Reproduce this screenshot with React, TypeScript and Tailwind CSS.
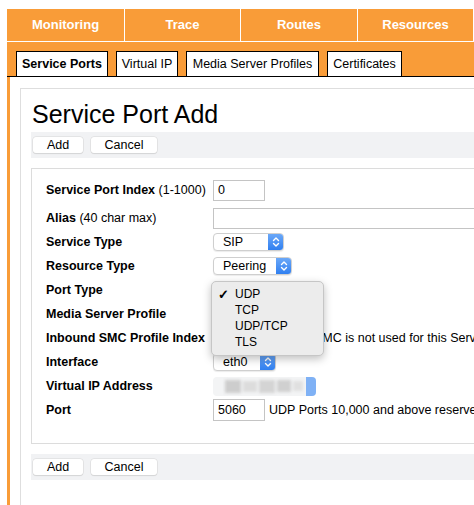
import React from "react";

const Chevrons = () => (
  <svg width="8" height="12" viewBox="0 0 8 12" fill="none" stroke="white" strokeWidth="1.4" strokeLinecap="round" strokeLinejoin="round">
    <path d="M1.5 4.5 L4 2 L6.5 4.5" />
    <path d="M1.5 7.5 L4 10 L6.5 7.5" />
  </svg>
);

function Select({ value, width, textPad = 9 }: { value: string; width: number; textPad?: number }) {
  return (
    <div
      className="h-[18px] flex items-stretch rounded-[4px] border border-[#cfcfcf] bg-white shadow-[0_1px_1px_rgba(0,0,0,0.08)] overflow-hidden"
      style={{ width }}
    >
      <div className="flex-1 flex items-center text-[12.5px] leading-none" style={{ paddingLeft: textPad }}>
        {value}
      </div>
      <div className="w-[15px] flex items-center justify-center bg-gradient-to-b from-[#6aa8f8] to-[#2f7ff0]">
        <Chevrons />
      </div>
    </div>
  );
}

function Row({ label, extra, children, h = 24, className = "" }: { label: string; extra?: string; children?: React.ReactNode; h?: number; className?: string }) {
  return (
    <div className={"flex items-center " + className} style={{ height: h }}>
      <div className="w-[167px] shrink-0 text-[12.5px] font-bold whitespace-nowrap">
        {label}
        {extra && <span className="font-normal"> {extra}</span>}
      </div>
      <div className="flex items-center whitespace-nowrap">{children}</div>
    </div>
  );
}

function ButtonBar() {
  return (
    <div className="h-[26px] bg-[#f1f2f4] flex items-center gap-[8px] pl-[2px]">
      <div className="w-[50px] h-[16px] bg-white rounded-[3px] shadow-[0_0_0_0.5px_#d6d6d6,0_1px_1px_rgba(0,0,0,0.12)] flex items-center justify-center text-[12.5px]">
        Add
      </div>
      <div className="w-[66px] h-[16px] bg-white rounded-[3px] shadow-[0_0_0_0.5px_#d6d6d6,0_1px_1px_rgba(0,0,0,0.12)] flex items-center justify-center text-[12.5px]">
        Cancel
      </div>
    </div>
  );
}

export default function App() {
  return (
    <div className="w-[474px] h-[505px] overflow-hidden bg-white pt-[9px] pl-[7px] font-['Liberation_Sans',Arial,sans-serif] text-black">
      <div className="h-full w-[640px] bg-[#f99c38] flex flex-col">
        {/* top nav */}
        <div className="flex h-[33px] border-b border-white text-white font-bold text-[13px] shrink-0">
          <div className="w-[118px] border-r border-white flex items-center justify-center">Monitoring</div>
          <div className="w-[116px] border-r border-white flex items-center justify-center">Trace</div>
          <div className="w-[117px] border-r border-white flex items-center justify-center">Routes</div>
          <div className="w-[116px] border-r border-white flex items-center justify-center">Resources</div>
        </div>
        {/* sub tabs */}
        <div className="h-[35px] flex items-end gap-[8px] pl-[9px] border-b border-black shrink-0 text-[12.5px] whitespace-nowrap">
          <div className="h-[25px] bg-white border border-b-0 border-black flex items-center justify-center font-bold w-[92px]">Service Ports</div>
          <div className="h-[25px] bg-white border border-b-0 border-black flex items-center justify-center w-[62px]">Virtual IP</div>
          <div className="h-[25px] bg-white border border-b-0 border-black flex items-center justify-center w-[133px]">Media Server Profiles</div>
          <div className="h-[25px] bg-white border border-b-0 border-black flex items-center justify-center w-[75px]">Certificates</div>
        </div>
        {/* content */}
        <div className="flex-1 ml-[3px] bg-white pt-[11px] pl-[10px]">
          <div className="h-full border-l border-t border-[#dedede] pl-[10px]">
            <div className="pt-[10px] h-[40px] text-[25px] leading-[30px] pl-[1px]">Service Port Add</div>
            <div className="mt-[3px]">
              <ButtonBar />
            </div>
            {/* form box */}
            <div className="mt-[10px] border border-[#dcdcdc] pl-[14px] pt-[9px] pb-[21px]">
              <Row label="Service Port Index" extra="(1-1000)">
                <div className="w-[52px] h-[21px] border border-[#c4c4c4] flex items-center pl-[4px] text-[12.5px]">0</div>
              </Row>
              <div className="h-[4px]" />
              <Row label="Alias" extra="(40 char max)">
                <div className="w-[300px] h-[21px] border border-[#c4c4c4]" />
              </Row>
              <Row label="Service Type">
                <Select value="SIP" width={71} />
              </Row>
              <Row label="Resource Type">
                <Select value="Peering" width={79} />
              </Row>
              <Row label="Port Type" className="relative">
                <Select value="" width={90} />
                <div className="absolute left-[165px] top-[3px] z-10 w-[113px] h-[75px] rounded-[5px] bg-[#ececec] border border-[#c6c6c6] shadow-[0_3px_8px_rgba(0,0,0,0.25)] pt-[4px] text-[12px]">
                  <div className="h-[16px] flex items-center">
                    <span className="w-[23px] pl-[6px] text-[13px] leading-none font-bold">✓</span>
                    <span>UDP</span>
                  </div>
                  <div className="h-[16px] flex items-center pl-[23px]">TCP</div>
                  <div className="h-[16px] flex items-center pl-[23px]">UDP/TCP</div>
                  <div className="h-[16px] flex items-center pl-[23px]">TLS</div>
                </div>
              </Row>
              <Row label="Media Server Profile" />
              <Row label="Inbound SMC Profile Index">
                <span className="ml-[101px] text-[12.5px]">SMC is not used for this Service Port</span>
              </Row>
              <Row label="Interface">
                <Select value="eth0" width={63} />
              </Row>
              <Row label="Virtual IP Address">
                <div className="w-[103px] h-[19px] rounded-[4px] bg-[#f3f4f5] flex items-stretch overflow-hidden">
                  <div className="flex-1 flex items-center gap-[2px] pl-[12px] blur-[1.5px]">
                    <div className="w-[16px] h-[13px] bg-[#cdcdcd]" />
                    <div className="w-[14px] h-[11px] bg-[#dcdcdc]" />
                    <div className="w-[16px] h-[13px] bg-[#d4d4d4]" />
                    <div className="w-[14px] h-[12px] bg-[#d0d0d0]" />
                    <div className="w-[10px] h-[10px] bg-[#e0e0e0]" />
                  </div>
                  <div className="w-[10px] bg-[#7fb1f5]" />
                </div>
              </Row>
              <Row label="Port">
                <div className="w-[52px] h-[22px] border border-[#c4c4c4] flex items-center pl-[4px] text-[12.5px]">5060</div>
                <span className="ml-[4px] text-[12.5px]">UDP Ports 10,000 and above reserved for media</span>
              </Row>
            </div>
            <div className="mt-[10px]">
              <ButtonBar />
            </div>
          </div>
        </div>
      </div>
    </div>
  );
}
